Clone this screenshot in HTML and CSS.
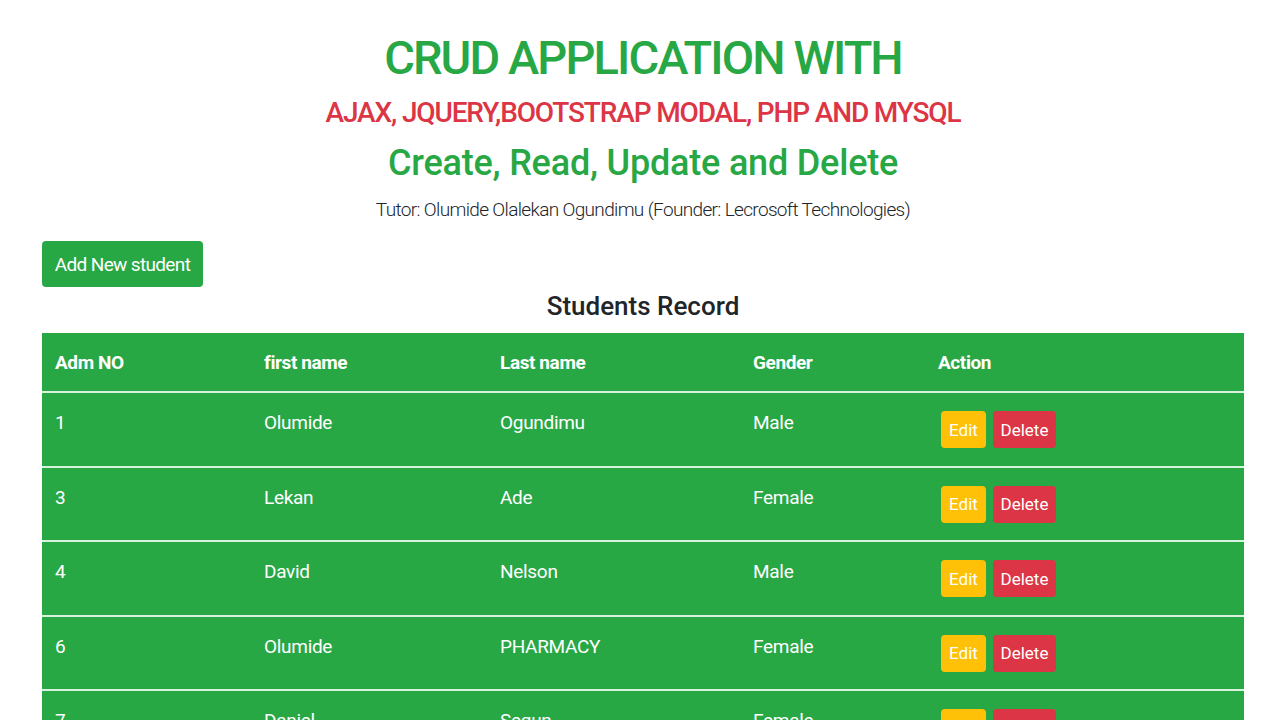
FILE: index.html
```html
<!DOCTYPE html>
<html lang="en">
<head>
<meta charset="utf-8">
<title>CRUD Application</title>
<link rel="stylesheet" href="styles.css">
</head>
<body>
<div class="page">
  <header class="intro">
    <h1 class="title">CRUD APPLICATION WITH</h1>
    <h3 class="subtitle">AJAX, JQUERY,BOOTSTRAP MODAL, PHP AND MYSQL</h3>
    <h2 class="crud">Create, Read, Update and Delete</h2>
    <p class="tutor">Tutor: Olumide Olalekan Ogundimu (Founder: Lecrosoft Technologies)</p>
  </header>
  <div class="toolbar">
    <button class="btn btn-success btn-add">Add New student</button>
  </div>
  <h4 class="record-title">Students Record</h4>
  <table class="records">
    <colgroup>
      <col class="c1"><col class="c2"><col class="c3"><col class="c4"><col class="c5">
    </colgroup>
    <thead>
      <tr><th>Adm NO</th><th>first name</th><th>Last name</th><th>Gender</th><th>Action</th></tr>
    </thead>
    <tbody>
      <tr><td>1</td><td>Olumide</td><td>Ogundimu</td><td>Male</td><td><span class="actions"><button class="btn btn-edit">Edit</button><button class="btn btn-delete">Delete</button></span></td></tr>
      <tr><td>3</td><td>Lekan</td><td>Ade</td><td>Female</td><td><span class="actions"><button class="btn btn-edit">Edit</button><button class="btn btn-delete">Delete</button></span></td></tr>
      <tr><td>4</td><td>David</td><td>Nelson</td><td>Male</td><td><span class="actions"><button class="btn btn-edit">Edit</button><button class="btn btn-delete">Delete</button></span></td></tr>
      <tr><td>6</td><td>Olumide</td><td>PHARMACY</td><td>Female</td><td><span class="actions"><button class="btn btn-edit">Edit</button><button class="btn btn-delete">Delete</button></span></td></tr>
      <tr><td>7</td><td>Daniel</td><td>Segun</td><td>Female</td><td><span class="actions"><button class="btn btn-edit">Edit</button><button class="btn btn-delete">Delete</button></span></td></tr>
    </tbody>
  </table>
</div>
</body>
</html>
```
FILE: styles.css
```css
* { box-sizing: border-box; }
html, body { margin: 0; padding: 0; background: #fff; }
body {
  font-family: "Roboto", "Noto Sans", sans-serif;
  color: #212529;
  overflow: hidden;
  height: 720px;
}
.page { padding: 0 36px 0 42px; }
.intro { text-align: center; padding-top: 30px; }
.title {
  margin: 0;
  font-size: 47px;
  line-height: 56px;
  font-weight: 500;
  letter-spacing: -1.9px;
  color: #28a745;
}
.subtitle {
  margin: 2px 0 0;
  font-size: 28px;
  line-height: 50px;
  font-weight: 500;
  letter-spacing: -1.15px;
  color: #dc3545;
}
.crud {
  margin: 1px 0 0;
  font-size: 36px;
  line-height: 48px;
  font-weight: 500;
  letter-spacing: -0.2px;
  color: #28a745;
}
.tutor {
  margin: -1px 0 0;
  font-size: 19px;
  line-height: 48px;
  font-weight: 300;
  letter-spacing: -0.65px;
}
.toolbar { margin-top: 7px; display: flex; }
.btn {
  border: none;
  font-family: inherit;
  color: #fff;
  border-radius: 4px;
  cursor: pointer;
}
.btn-success { background: #28a745; }
.btn-add {
  height: 46px;
  width: 161px;
  padding: 0;
  font-size: 19px;
  letter-spacing: -0.65px;
}
.record-title {
  margin: 0;
  text-align: center;
  font-size: 26px;
  line-height: 38px;
  font-weight: 500;
}
.records {
  margin-top: 8px;
  width: 1202px;
  border-collapse: collapse;
  background: #28a745;
  color: #fff;
  table-layout: fixed;
}
.c1 { width: 209px; }
.c2 { width: 236px; }
.c3 { width: 253px; }
.c4 { width: 185px; }
.records th {
  text-align: left;
  font-weight: 700;
  font-size: 19px;
  letter-spacing: -0.4px;
  height: 59px;
  padding: 0 13px;
  border-bottom: 2px solid #d9f2dd;
}
.records td {
  font-size: 19px;
  letter-spacing: -0.3px;
  line-height: 24px;
  height: 74.5px;
  padding: 18px 13px 0;
  border-bottom: 2px solid #d9f2dd;
  vertical-align: top;
}
.actions { display: flex; gap: 7px; padding-left: 3px; padding-top: 0; }
.btn-edit, .btn-delete {
  height: 37px;
  font-size: 17px;
  padding: 0;
}
.btn-edit { background: #ffc107; width: 45px; }
.btn-delete { background: #dc3545; width: 63px; }
```
